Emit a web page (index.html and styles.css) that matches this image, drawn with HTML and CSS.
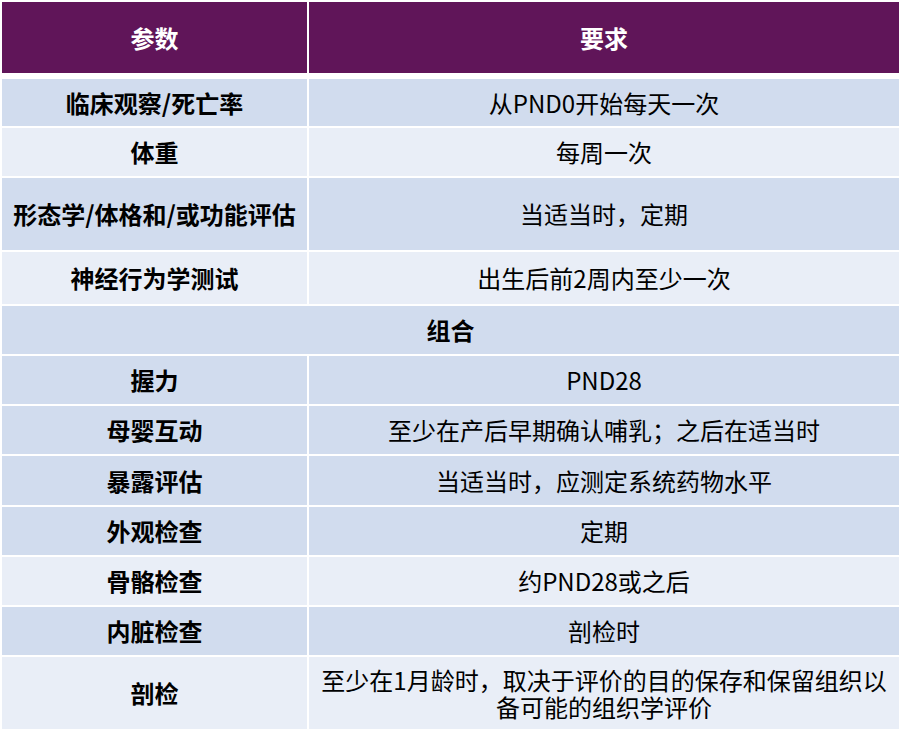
FILE: index.html
```html
<!DOCTYPE html>
<html lang="zh-CN">
<head>
<meta charset="utf-8">
<title>参数与要求</title>
<link rel="stylesheet" href="styles.css">
</head>
<body>
<table class="req-table">
  <colgroup>
    <col class="col-param">
    <col class="col-req">
  </colgroup>
  <thead>
    <tr class="row-head">
      <th>参数</th>
      <th>要求</th>
    </tr>
  </thead>
  <tbody>
    <tr class="row-std dark">
      <td class="param">临床观察/死亡率</td>
      <td class="req">从PND0开始每天一次</td>
    </tr>
    <tr class="row-std2 light">
      <td class="param">体重</td>
      <td class="req">每周一次</td>
    </tr>
    <tr class="row-tall dark">
      <td class="param">形态学/体格和/或功能评估</td>
      <td class="req">当适当时，定期</td>
    </tr>
    <tr class="row-mid light">
      <td class="param">神经行为学测试</td>
      <td class="req">出生后前2周内至少一次</td>
    </tr>
    <tr class="row-std2 dark">
      <td class="param group" colspan="2">组合</td>
    </tr>
    <tr class="row-sub dark">
      <td class="param">握力</td>
      <td class="req">PND28</td>
    </tr>
    <tr class="row-sub dark">
      <td class="param">母婴互动</td>
      <td class="req">至少在产后早期确认哺乳；之后在适当时</td>
    </tr>
    <tr class="row-sub dark">
      <td class="param">暴露评估</td>
      <td class="req">当适当时，应测定系统药物水平</td>
    </tr>
    <tr class="row-sub dark">
      <td class="param">外观检查</td>
      <td class="req">定期</td>
    </tr>
    <tr class="row-sub light">
      <td class="param">骨骼检查</td>
      <td class="req">约PND28或之后</td>
    </tr>
    <tr class="row-sub dark">
      <td class="param">内脏检查</td>
      <td class="req">剖检时</td>
    </tr>
    <tr class="row-tall light">
      <td class="param">剖检</td>
      <td class="req multi">至少在1月龄时，取决于评价的目的保存和保留组织以<br>备可能的组织学评价</td>
    </tr>
  </tbody>
</table>
</body>
</html>
```

FILE: styles.css
```css
html, body {
  margin: 0;
  padding: 0;
  background: #ffffff;
}

.req-table {
  border-collapse: separate;
  border-spacing: 2px;
  table-layout: fixed;
  width: 901px;
  font-family: "Noto Sans CJK SC", "Noto Sans", sans-serif;
  font-size: 24px;
  color: #000000;
}

.col-param { width: 305px; }
.col-req { width: 590px; }

.req-table th,
.req-table td {
  padding: 0 8px;
  text-align: center;
  vertical-align: middle;
  line-height: 1.15;
}

.row-head th {
  height: 71px;
  background: #601559;
  background-clip: padding-box;
  border-bottom: 4px solid #ffffff;
  color: #ffffff;
  font-weight: 700;
}

.row-std td { height: 47px; }
.row-std2 td { height: 48px; }
.row-tall td { height: 72px; }
.row-mid td { height: 52px; }
.row-sub td { height: 48.2px; }

.dark td { background: #d1dcee; }
.light td { background: #e9eef7; }

.param {
  font-weight: 700;
}

.req {
  font-weight: 400;
}

.multi {
  line-height: 28px;
}
```
